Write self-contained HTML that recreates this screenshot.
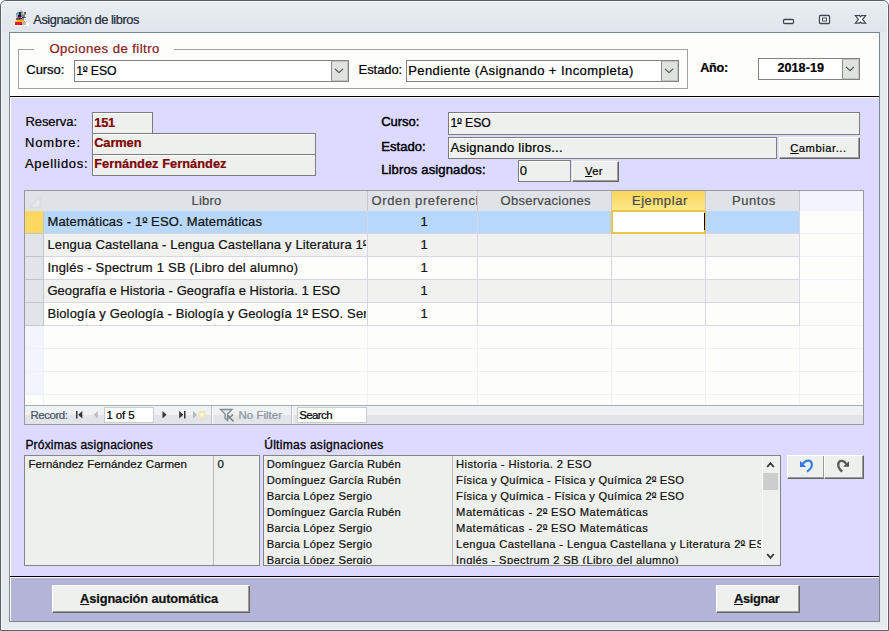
<!DOCTYPE html>
<html><head><meta charset="utf-8"><style>
html,body{margin:0;padding:0;width:889px;height:631px;overflow:hidden;background:#fff;}
body{position:relative;font-family:"Liberation Sans",sans-serif;}
body>div,body>svg{position:absolute;}
.o{text-decoration:underline;text-underline-offset:-0.3em;text-decoration-thickness:1px;}
.t{white-space:pre;-webkit-text-stroke:0.22px currentColor;}
</style></head><body>
<div style="left:0px;top:0px;width:889px;height:631px;background:#e6ebef;border:1px solid #56616c;border-radius:6px 6px 0 0;box-sizing:border-box;"></div>
<div style="left:1px;top:1px;width:887px;height:629px;border:1px solid #f7f9fa;border-radius:5px 5px 0 0;box-sizing:border-box;"></div>
<div style="left:2px;top:2px;width:885px;height:30px;background:linear-gradient(#e9eef2,#dfe5ea);border-radius:4px 4px 0 0;"></div>
<svg style="left:12px;top:8px" width="18" height="18" viewBox="0 0 18 18" shape-rendering="crispEdges">
<rect x="1" y="15" width="16" height="3" fill="#fbfbfb"/>
<rect x="8" y="2" width="3" height="2" fill="#e9a6d9"/><rect x="10" y="2" width="2" height="1" fill="#f4f4f4"/>
<rect x="5" y="4" width="2" height="1" fill="#d86fd0"/><rect x="7" y="4" width="2" height="1" fill="#222"/><rect x="9" y="4" width="2" height="1" fill="#3f9be8"/><rect x="11" y="4" width="2" height="2" fill="#e0e0e0"/><rect x="12" y="4" width="2" height="2" fill="#666"/>
<rect x="4" y="5" width="3" height="2" fill="#52a7f0"/><rect x="7" y="5" width="2" height="2" fill="#1c1c2c"/><rect x="9" y="5" width="2" height="2" fill="#8fcf3a"/><rect x="11" y="6" width="3" height="1" fill="#9a9a9a"/>
<rect x="4" y="7" width="2" height="2" fill="#8fd33a"/><rect x="6" y="7" width="3" height="2" fill="#141430"/><rect x="9" y="7" width="1" height="2" fill="#7a58c8"/><rect x="10" y="7" width="3" height="2" fill="#7d7d7d"/>
<rect x="5" y="9" width="4" height="1" fill="#c02ad0"/><rect x="9" y="9" width="1" height="1" fill="#eee"/><rect x="10" y="9" width="2" height="1" fill="#3a2048"/><rect x="12" y="9" width="2" height="1" fill="#6a6a6a"/>
<rect x="4" y="10" width="3" height="1" fill="#a81ec0"/><rect x="7" y="10" width="3" height="1" fill="#1a1a1a"/><rect x="10" y="10" width="2" height="1" fill="#888"/>
<rect x="4" y="11" width="4" height="1" fill="#6a6a28"/><rect x="8" y="11" width="2" height="1" fill="#f08a1e"/><rect x="10" y="11" width="2" height="1" fill="#8a8a70"/>
<rect x="5" y="12" width="6" height="1" fill="#f2a21e"/><rect x="11" y="12" width="1" height="1" fill="#e9a0a0"/>
<rect x="3" y="13" width="9" height="1" fill="#f0c21a"/><rect x="12" y="13" width="1" height="1" fill="#aaa"/>
<rect x="3" y="14" width="7" height="3" fill="#ea1a1e"/><rect x="8" y="16" width="2" height="1" fill="#a00"/><rect x="10" y="14" width="4" height="2" fill="#c9b4b4"/><rect x="10" y="16" width="4" height="1" fill="#bbb"/>
</svg>
<div class="t" style="left:33.30px;top:10.50px;font-size:12.80px;line-height:17.92px;letter-spacing:-0.450px;color:#1e2b38;">Asignación de libros</div>
<svg style="left:780px;top:12px" width="92" height="16" viewBox="0 0 92 16">
<rect x="3.5" y="7.5" width="10" height="4" rx="1.2" fill="#fff" stroke="#3c4652" stroke-width="1.3"/>
<rect x="39.5" y="3.5" width="10" height="8" rx="1" fill="#fff" stroke="#3c4652" stroke-width="1.3"/>
<rect x="42.5" y="6" width="4" height="3" fill="#fff" stroke="#3c4652" stroke-width="1"/>
<defs><clipPath id="cxo"><rect x="70" y="3" width="20" height="8.8"/></clipPath><clipPath id="cxi"><rect x="70" y="4.2" width="20" height="6.4"/></clipPath></defs>
<g clip-path="url(#cxo)"><path d="M74.9 0.4 L86.1 14.4 M86.1 0.4 L74.9 14.4" stroke="#3c4652" stroke-width="4.4"/></g>
<g clip-path="url(#cxi)"><path d="M74.9 0.4 L86.1 14.4 M86.1 0.4 L74.9 14.4" stroke="#fff" stroke-width="2.1"/></g>
</svg>
<div style="left:9px;top:32px;width:871px;height:590px;border:1px solid #7d868f;box-sizing:border-box;background:#fdfdfb;"></div>
<div style="left:10px;top:96px;width:869px;height:1px;background:#000;"></div>
<div style="left:10px;top:97px;width:869px;height:479px;background:#dcdaff;border-left:1px solid #fff;border-top:1px solid #fff;box-sizing:border-box;"></div>
<div style="left:10px;top:576px;width:869px;height:1px;background:#000;"></div>
<div style="left:10px;top:577px;width:869px;height:44px;background:#b4b3d8;border-left:1px solid #fff;border-top:1px solid #fff;box-sizing:border-box;"></div>
<div style="left:18px;top:49px;width:670px;height:40px;border:1px solid #a0a0a0;box-sizing:border-box;"></div>
<div style="left:34px;top:44px;width:140px;height:10px;background:#fdfdfb;"></div>
<div class="t" style="left:49.40px;top:40.29px;font-size:13.20px;line-height:18.48px;letter-spacing:0.429px;color:#8b1a1a;">Opciones de filtro</div>
<div class="t" style="left:26.30px;top:61.40px;font-size:13.00px;line-height:18.20px;letter-spacing:-0.057px;color:#000;">Curso:</div>
<div style="left:74px;top:60px;width:275px;height:22px;border:1px solid #838383;box-sizing:border-box;background:#fff;"></div>
<div style="left:331px;top:61px;width:17px;height:20px;background:#e0e2e0;border:1px solid #c2c4c2;border-left-color:#8a8a8a;box-sizing:border-box;"></div>
<svg style="left:333.5px;top:66.0px" width="10" height="8" viewBox="0 0 10 8"><path d="M1 2.8 L5 6.6 L9 2.8" fill="none" stroke="#444" stroke-width="1.1"/></svg>
<div class="t" style="left:76.20px;top:62.73px;font-size:12.20px;line-height:17.08px;color:#000;">1<span class="o">º</span> ESO</div>
<div class="t" style="left:358.60px;top:61.40px;font-size:13.00px;line-height:18.20px;letter-spacing:-0.080px;color:#000;">Estado:</div>
<div style="left:406px;top:60px;width:273px;height:22px;border:1px solid #838383;box-sizing:border-box;background:#fff;"></div>
<div style="left:661px;top:61px;width:17px;height:20px;background:#e0e2e0;border:1px solid #c2c4c2;border-left-color:#8a8a8a;box-sizing:border-box;"></div>
<svg style="left:663.5px;top:66.0px" width="10" height="8" viewBox="0 0 10 8"><path d="M1 2.8 L5 6.6 L9 2.8" fill="none" stroke="#444" stroke-width="1.1"/></svg>
<div class="t" style="left:408.20px;top:61.90px;font-size:13.00px;line-height:18.20px;letter-spacing:0.435px;color:#000;">Pendiente (Asignando + Incompleta)</div>
<div class="t" style="left:700.20px;top:60.31px;font-size:12.60px;line-height:17.64px;font-weight:bold;letter-spacing:-0.229px;color:#000;">Año:</div>
<div style="left:758px;top:58px;width:102px;height:22px;border:1px solid #838383;box-sizing:border-box;background:#fff;"></div>
<div style="left:842px;top:59px;width:17px;height:20px;background:#e0e2e0;border:1px solid #c2c4c2;border-left-color:#8a8a8a;box-sizing:border-box;"></div>
<svg style="left:844.5px;top:64.0px" width="10" height="8" viewBox="0 0 10 8"><path d="M1 2.8 L5 6.6 L9 2.8" fill="none" stroke="#444" stroke-width="1.1"/></svg>
<div class="t" style="left:777.40px;top:60.31px;font-size:12.60px;line-height:17.64px;font-weight:bold;letter-spacing:0.061px;color:#000;">2018-19</div>
<div class="t" style="left:25.40px;top:113.40px;font-size:13.00px;line-height:18.20px;letter-spacing:-0.059px;color:#000;">Reserva:</div>
<div class="t" style="left:25.00px;top:134.40px;font-size:13.00px;line-height:18.20px;letter-spacing:0.859px;color:#000;">Nombre:</div>
<div class="t" style="left:25.00px;top:155.00px;font-size:13.00px;line-height:18.20px;letter-spacing:0.682px;color:#000;">Apellidos:</div>
<div style="left:92px;top:112px;width:61px;height:22px;background:#eef0ed;border:1px solid #7c7c7c;box-shadow:inset 1px 1px 0 #fff;box-sizing:border-box;"></div>
<div style="left:92px;top:133px;width:224px;height:22px;background:#eef0ed;border:1px solid #7c7c7c;box-shadow:inset 1px 1px 0 #fff;box-sizing:border-box;"></div>
<div style="left:92px;top:154px;width:224px;height:22px;background:#eef0ed;border:1px solid #7c7c7c;box-shadow:inset 1px 1px 0 #fff;box-sizing:border-box;"></div>
<div class="t" style="left:94.20px;top:113.60px;font-size:12.80px;line-height:17.92px;font-weight:bold;letter-spacing:-0.177px;color:#800000;">151</div>
<div class="t" style="left:94.20px;top:134.30px;font-size:12.80px;line-height:17.92px;font-weight:bold;letter-spacing:-0.072px;color:#800000;">Carmen</div>
<div class="t" style="left:94.20px;top:155.00px;font-size:12.80px;line-height:17.92px;font-weight:bold;letter-spacing:0.040px;color:#800000;">Fernández Fernández</div>
<div class="t" style="left:381.20px;top:113.40px;font-size:13.00px;line-height:18.20px;letter-spacing:-0.017px;color:#000;-webkit-text-stroke:0.45px #000;">Curso:</div>
<div class="t" style="left:381.20px;top:138.40px;font-size:13.00px;line-height:18.20px;letter-spacing:0.053px;color:#000;-webkit-text-stroke:0.45px #000;">Estado:</div>
<div class="t" style="left:381.20px;top:161.40px;font-size:13.00px;line-height:18.20px;letter-spacing:0.151px;color:#000;-webkit-text-stroke:0.45px #000;">Libros asignados:</div>
<div style="left:448px;top:112px;width:412px;height:23px;background:#eef0ed;border:1px solid #7c7c7c;box-shadow:inset 1px 1px 0 #fff;box-sizing:border-box;"></div>
<div class="t" style="left:450.40px;top:114.73px;font-size:12.20px;line-height:17.08px;color:#000;">1<span class="o">º</span> ESO</div>
<div style="left:448px;top:137px;width:329px;height:22px;background:#eef0ed;border:1px solid #7c7c7c;box-shadow:inset 1px 1px 0 #fff;box-sizing:border-box;"></div>
<div class="t" style="left:450.40px;top:138.90px;font-size:13.00px;line-height:18.20px;letter-spacing:0.292px;color:#000;">Asignando libros...</div>
<div style="left:779px;top:137px;width:81px;height:22px;background:#eef0ed;border-top:1px solid #fff;border-left:1px solid #fff;border-right:1px solid #646464;border-bottom:1px solid #646464;box-shadow:inset -1px -1px 0 #9c9c9c;box-sizing:border-box;"></div>
<div class="t" style="left:790.20px;top:140.98px;font-size:11.20px;line-height:15.68px;color:#000;letter-spacing:0.551px;"><u>C</u>ambiar...</div>
<div style="left:518px;top:160px;width:53px;height:22px;background:#eef0ed;border:1px solid #7c7c7c;box-shadow:inset 1px 1px 0 #fff;box-sizing:border-box;"></div>
<div class="t" style="left:519.80px;top:162.40px;font-size:13.00px;line-height:18.20px;color:#000;">0</div>
<div style="left:572px;top:161px;width:47px;height:21px;background:#eef0ed;border-top:1px solid #fff;border-left:1px solid #fff;border-right:1px solid #646464;border-bottom:1px solid #646464;box-shadow:inset -1px -1px 0 #9c9c9c;box-sizing:border-box;"></div>
<div class="t" style="left:585.00px;top:164.28px;font-size:11.20px;line-height:15.68px;color:#000;letter-spacing:0.295px;"><u>V</u>er</div>
<div style="left:24px;top:190px;width:840px;height:235px;border:1px solid #9a9a9a;box-sizing:border-box;background:#fdfdfb;"></div>
<div style="left:25px;top:191px;width:838px;height:20px;background:#f4f4fe;"></div>
<div style="left:25px;top:191px;width:775px;height:20px;background:#dfe3e8;"></div>
<div style="left:612px;top:191px;width:93px;height:20px;background:linear-gradient(#f9d55a,#fde98c);"></div>
<div style="left:367px;top:191px;width:1px;height:20px;background:#c4c8cc;"></div>
<div style="left:477px;top:191px;width:1px;height:20px;background:#c4c8cc;"></div>
<div style="left:611px;top:191px;width:1px;height:20px;background:#c4c8cc;"></div>
<div style="left:705px;top:191px;width:1px;height:20px;background:#c4c8cc;"></div>
<div style="left:799px;top:191px;width:1px;height:20px;background:#c4c8cc;"></div>
<svg style="left:28px;top:195px" width="14" height="14" viewBox="0 0 14 14"><path d="M2 12 L12 2 L12 12 Z" fill="#e9ecef" stroke="#cfd4d9" stroke-width="0.8"/></svg>
<div class="t" style="left:191.50px;top:192.30px;font-size:13.00px;line-height:18.20px;letter-spacing:0.224px;color:#4a4a4a;">Libro</div>
<div class="t" style="left:371.50px;top:192.30px;font-size:13.00px;line-height:18.20px;color:#4a4a4a;width:105px;overflow:hidden;letter-spacing:0.63px;">Orden preferencia</div>
<div class="t" style="left:500.50px;top:192.30px;font-size:13.00px;line-height:18.20px;letter-spacing:0.275px;color:#4a4a4a;">Observaciones</div>
<div class="t" style="left:631.90px;top:192.30px;font-size:13.00px;line-height:18.20px;letter-spacing:0.587px;color:#4a4a4a;">Ejemplar</div>
<div class="t" style="left:732.00px;top:192.30px;font-size:13.00px;line-height:18.20px;letter-spacing:0.546px;color:#4a4a4a;">Puntos</div>
<div style="left:44px;top:211px;width:755px;height:22px;background:#b7d8fb;"></div>
<div style="left:25px;top:211px;width:18px;height:22px;background:#ffd862;"></div>
<div style="left:25px;top:233px;width:775px;height:1px;background:#d6d6e6;"></div>
<div style="left:800px;top:233px;width:63px;height:1px;background:#eef1f6;"></div>
<div style="left:25px;top:233px;width:18px;height:1px;background:#c4c8cc;"></div>
<div style="left:44px;top:234px;width:755px;height:22px;background:#f1f2ef;"></div>
<div style="left:25px;top:234px;width:18px;height:22px;background:#e1e5e9;"></div>
<div style="left:25px;top:256px;width:775px;height:1px;background:#d6d6e6;"></div>
<div style="left:800px;top:256px;width:63px;height:1px;background:#eef1f6;"></div>
<div style="left:25px;top:256px;width:18px;height:1px;background:#c4c8cc;"></div>
<div style="left:44px;top:257px;width:755px;height:22px;background:#fdfdfb;"></div>
<div style="left:25px;top:257px;width:18px;height:22px;background:#e1e5e9;"></div>
<div style="left:25px;top:279px;width:775px;height:1px;background:#d6d6e6;"></div>
<div style="left:800px;top:279px;width:63px;height:1px;background:#eef1f6;"></div>
<div style="left:25px;top:279px;width:18px;height:1px;background:#c4c8cc;"></div>
<div style="left:44px;top:280px;width:755px;height:22px;background:#f1f2ef;"></div>
<div style="left:25px;top:280px;width:18px;height:22px;background:#e1e5e9;"></div>
<div style="left:25px;top:302px;width:775px;height:1px;background:#d6d6e6;"></div>
<div style="left:800px;top:302px;width:63px;height:1px;background:#eef1f6;"></div>
<div style="left:25px;top:302px;width:18px;height:1px;background:#c4c8cc;"></div>
<div style="left:44px;top:303px;width:755px;height:22px;background:#fdfdfb;"></div>
<div style="left:25px;top:303px;width:18px;height:22px;background:#e1e5e9;"></div>
<div style="left:25px;top:325px;width:775px;height:1px;background:#d6d6e6;"></div>
<div style="left:800px;top:325px;width:63px;height:1px;background:#eef1f6;"></div>
<div style="left:25px;top:325px;width:18px;height:1px;background:#c4c8cc;"></div>
<div style="left:25px;top:326px;width:18px;height:22px;background:#f4f4fd;"></div>
<div style="left:25px;top:348px;width:838px;height:1px;background:#eef1f6;"></div>
<div style="left:25px;top:349px;width:18px;height:22px;background:#f4f4fd;"></div>
<div style="left:25px;top:371px;width:838px;height:1px;background:#eef1f6;"></div>
<div style="left:25px;top:372px;width:18px;height:22px;background:#f4f4fd;"></div>
<div style="left:25px;top:394px;width:838px;height:1px;background:#eef1f6;"></div>
<div style="left:43px;top:211px;width:1px;height:115px;background:#d6d6e6;"></div>
<div style="left:43px;top:326px;width:1px;height:79px;background:#eef1f6;"></div>
<div style="left:367px;top:211px;width:1px;height:115px;background:#d6d6e6;"></div>
<div style="left:367px;top:326px;width:1px;height:79px;background:#eef1f6;"></div>
<div style="left:477px;top:211px;width:1px;height:115px;background:#d6d6e6;"></div>
<div style="left:477px;top:326px;width:1px;height:79px;background:#eef1f6;"></div>
<div style="left:611px;top:211px;width:1px;height:115px;background:#d6d6e6;"></div>
<div style="left:611px;top:326px;width:1px;height:79px;background:#eef1f6;"></div>
<div style="left:705px;top:211px;width:1px;height:115px;background:#d6d6e6;"></div>
<div style="left:705px;top:326px;width:1px;height:79px;background:#eef1f6;"></div>
<div style="left:799px;top:211px;width:1px;height:115px;background:#d6d6e6;"></div>
<div style="left:799px;top:326px;width:1px;height:79px;background:#eef1f6;"></div>
<div style="left:43px;top:211px;width:1px;height:115px;background:#c4c8cc;"></div>
<div class="t" style="left:47.40px;top:212.60px;font-size:13.00px;line-height:18.20px;color:#111;width:319px;overflow:hidden;letter-spacing:0.169px;">Matemáticas - 1<span class="o">º</span> ESO. Matemáticas</div>
<div class="t" style="left:420.50px;top:212.60px;font-size:13.00px;line-height:18.20px;color:#111;">1</div>
<div class="t" style="left:47.40px;top:235.60px;font-size:13.00px;line-height:18.20px;color:#111;width:319px;overflow:hidden;letter-spacing:0.147px;">Lengua Castellana - Lengua Castellana y Literatura 1<span class="o">º</span> ESO</div>
<div class="t" style="left:420.50px;top:235.60px;font-size:13.00px;line-height:18.20px;color:#111;">1</div>
<div class="t" style="left:47.40px;top:258.60px;font-size:13.00px;line-height:18.20px;color:#111;width:319px;overflow:hidden;letter-spacing:0.214px;">Inglés - Spectrum 1 SB (Libro del alumno)</div>
<div class="t" style="left:420.50px;top:258.60px;font-size:13.00px;line-height:18.20px;color:#111;">1</div>
<div class="t" style="left:47.40px;top:281.60px;font-size:13.00px;line-height:18.20px;color:#111;width:319px;overflow:hidden;letter-spacing:0.059px;">Geografía e Historia - Geografía e Historia. 1 ESO</div>
<div class="t" style="left:420.50px;top:281.60px;font-size:13.00px;line-height:18.20px;color:#111;">1</div>
<div class="t" style="left:47.40px;top:304.60px;font-size:13.00px;line-height:18.20px;color:#111;width:319px;overflow:hidden;letter-spacing:0.147px;">Biología y Geología - Biología y Geología 1<span class="o">º</span> ESO. Serie</div>
<div class="t" style="left:420.50px;top:304.60px;font-size:13.00px;line-height:18.20px;color:#111;">1</div>
<div style="left:611px;top:210px;width:95px;height:24px;border:2px solid #eac54a;background:#fff;box-sizing:border-box;"></div>
<div style="left:704px;top:213px;width:1px;height:17px;background:#000;"></div>
<div style="left:25px;top:405px;width:838px;height:1px;background:#a9adb2;"></div>
<div style="left:25px;top:406px;width:838px;height:9px;background:#eef2f5;"></div>
<div style="left:25px;top:415px;width:838px;height:9px;background:#e1e5e9;"></div>
<div class="t" style="left:30.40px;top:407.27px;font-size:11.50px;line-height:16.10px;letter-spacing:-0.444px;color:#4a5560;">Record:</div>
<svg style="left:70px;top:406px" width="145" height="18" viewBox="0 0 145 18">
<rect x="6" y="5" width="1.5" height="7.5" fill="#2e353b"/><path d="M12.3 5 L8.2 8.75 L12.3 12.5 Z" fill="#2e353b"/>
<path d="M27.8 5 L23.8 8.75 L27.8 12.5 Z" fill="#b9bec4"/>
<path d="M92.5 5 L96.5 8.75 L92.5 12.5 Z" fill="#2e353b"/>
<path d="M109.2 5 L113.3 8.75 L109.2 12.5 Z" fill="#2e353b"/><rect x="114" y="5" width="1.5" height="7.5" fill="#2e353b"/>
<path d="M123 5 L127 8.75 L123 12.5 Z" fill="#b4b9bf"/>
<rect x="128.5" y="5" width="7" height="7.5" fill="#f1e6b2"/><circle cx="132" cy="8.8" r="2" fill="#faf5dc"/>
</svg>
<svg style="left:218px;top:407px" width="18" height="16" viewBox="0 0 18 16">
<path d="M2.5 2.5 H14 L9.5 7 V13.5 L7 11.5 V7 Z" fill="#e4e7ea" stroke="#858b91" stroke-width="1.3"/>
<path d="M9.5 8 L15.5 14.5 M15 7.5 L10 12" stroke="#7d8389" stroke-width="1.6"/>
</svg>
<div style="left:104px;top:407px;width:50px;height:16px;background:#fff;border:1px solid #c9cdd2;box-sizing:border-box;"></div>
<div class="t" style="left:106.40px;top:407.47px;font-size:11.50px;line-height:16.10px;letter-spacing:-0.094px;color:#000;">1 of 5</div>
<div style="left:211px;top:406px;width:1px;height:18px;background:#bfc4c9;"></div>
<div style="left:212px;top:406px;width:1px;height:18px;background:#fff;"></div>
<div style="left:291px;top:406px;width:1px;height:18px;background:#bfc4c9;"></div>
<div style="left:292px;top:406px;width:1px;height:18px;background:#fff;"></div>
<div class="t" style="left:238.50px;top:407.47px;font-size:11.50px;line-height:16.10px;letter-spacing:0.006px;color:#8d9399;">No Filter</div>
<div style="left:297px;top:407px;width:70px;height:16px;background:#fff;border:1px solid #c9cdd2;box-sizing:border-box;"></div>
<div class="t" style="left:299.20px;top:407.47px;font-size:11.50px;line-height:16.10px;letter-spacing:-0.607px;color:#000;">Search</div>
<div class="t" style="left:25.40px;top:436.94px;font-size:12.00px;line-height:16.80px;letter-spacing:0.196px;color:#000;-webkit-text-stroke:0.3px #000;">Próximas asignaciones</div>
<div class="t" style="left:264.20px;top:436.94px;font-size:12.00px;line-height:16.80px;letter-spacing:0.296px;color:#000;-webkit-text-stroke:0.3px #000;">Últimas asignaciones</div>
<div style="left:24px;top:455px;width:236px;height:111px;background:#eef0ed;border:1px solid #858585;box-sizing:border-box;"></div>
<div style="left:213px;top:456px;width:1px;height:109px;background:#b9b9b9;"></div>
<div class="t" style="left:28.50px;top:456.27px;font-size:11.50px;line-height:16.10px;letter-spacing:0.047px;color:#111;">Fernández Fernández Carmen</div>
<div class="t" style="left:217.40px;top:456.27px;font-size:11.50px;line-height:16.10px;color:#111;">0</div>
<div style="left:263px;top:455px;width:518px;height:111px;background:#eef0ed;border:1px solid #858585;box-sizing:border-box;"></div>
<div style="left:452px;top:456px;width:1px;height:109px;background:#b9b9b9;"></div>
<div style="left:264px;top:456px;width:498px;height:108px;overflow:hidden;">
<div class="t" style="position:absolute;left:2.80px;top:0.88px;font-size:11.2px;line-height:15.68px;letter-spacing:0.186px;color:#111;">Domínguez García Rubén</div>
<div class="t" style="position:absolute;left:192.10px;top:0.88px;width:305px;overflow:hidden;font-size:11.2px;line-height:15.68px;letter-spacing:0.416px;color:#111;">Historia - Historia. 2 ESO</div>
<div class="t" style="position:absolute;left:2.80px;top:16.88px;font-size:11.2px;line-height:15.68px;letter-spacing:0.186px;color:#111;">Domínguez García Rubén</div>
<div class="t" style="position:absolute;left:192.10px;top:16.88px;width:305px;overflow:hidden;font-size:11.2px;line-height:15.68px;letter-spacing:0.270px;color:#111;">Física y Química - Física y Química 2<span class="o">º</span> ESO</div>
<div class="t" style="position:absolute;left:2.80px;top:32.88px;font-size:11.2px;line-height:15.68px;letter-spacing:0.247px;color:#111;">Barcia López Sergio</div>
<div class="t" style="position:absolute;left:192.10px;top:32.88px;width:305px;overflow:hidden;font-size:11.2px;line-height:15.68px;letter-spacing:0.270px;color:#111;">Física y Química - Física y Química 2<span class="o">º</span> ESO</div>
<div class="t" style="position:absolute;left:2.80px;top:48.88px;font-size:11.2px;line-height:15.68px;letter-spacing:0.186px;color:#111;">Domínguez García Rubén</div>
<div class="t" style="position:absolute;left:192.10px;top:48.88px;width:305px;overflow:hidden;font-size:11.2px;line-height:15.68px;letter-spacing:0.480px;color:#111;">Matemáticas - 2<span class="o">º</span> ESO Matemáticas</div>
<div class="t" style="position:absolute;left:2.80px;top:64.88px;font-size:11.2px;line-height:15.68px;letter-spacing:0.247px;color:#111;">Barcia López Sergio</div>
<div class="t" style="position:absolute;left:192.10px;top:64.88px;width:305px;overflow:hidden;font-size:11.2px;line-height:15.68px;letter-spacing:0.480px;color:#111;">Matemáticas - 2<span class="o">º</span> ESO Matemáticas</div>
<div class="t" style="position:absolute;left:2.80px;top:80.88px;font-size:11.2px;line-height:15.68px;letter-spacing:0.247px;color:#111;">Barcia López Sergio</div>
<div class="t" style="position:absolute;left:192.10px;top:80.88px;width:305px;overflow:hidden;font-size:11.2px;line-height:15.68px;letter-spacing:0.379px;color:#111;">Lengua Castellana - Lengua Castellana y Literatura 2<span class="o">º</span> ESO</div>
<div class="t" style="position:absolute;left:2.80px;top:96.88px;font-size:11.2px;line-height:15.68px;letter-spacing:0.247px;color:#111;">Barcia López Sergio</div>
<div class="t" style="position:absolute;left:192.10px;top:96.88px;width:305px;overflow:hidden;font-size:11.2px;line-height:15.68px;letter-spacing:0.354px;color:#111;">Inglés - Spectrum 2 SB (Libro del alumno)</div>
</div>
<div style="left:762px;top:456px;width:1px;height:109px;background:#fff;"></div>
<div style="left:763px;top:473px;width:15px;height:17px;background:#cdcdcd;"></div>
<svg style="left:764px;top:460px" width="12" height="10" viewBox="0 0 12 10"><path d="M3.2 7 L6.5 3.2 L9.8 7" fill="none" stroke="#3a3a3a" stroke-width="1.9"/></svg>
<svg style="left:764px;top:551px" width="12" height="10" viewBox="0 0 12 10"><path d="M3.2 3 L6.5 6.8 L9.8 3" fill="none" stroke="#3a3a3a" stroke-width="1.9"/></svg>
<div style="left:787px;top:455px;width:38px;height:24px;background:#eef0ed;border-top:1px solid #fff;border-left:1px solid #fff;border-right:1px solid #646464;border-bottom:1px solid #646464;box-shadow:inset -1px -1px 0 #9c9c9c;box-sizing:border-box;"></div>
<div style="left:824px;top:455px;width:40px;height:24px;background:#eef0ed;border-top:1px solid #fff;border-left:1px solid #fff;border-right:1px solid #646464;border-bottom:1px solid #646464;box-shadow:inset -1px -1px 0 #9c9c9c;box-sizing:border-box;"></div>
<svg style="left:796px;top:457px" width="60" height="18" viewBox="0 0 60 18">
<path d="M4 3.8 V9.9 H10.2 Z" fill="#3477e0"/>
<path d="M6.5 7.2 C9 2.8 15 2.2 15.8 6.5 C16.4 10 13.5 13 11 14.6" fill="none" stroke="#3a7fe6" stroke-width="2.2"/>
<path d="M53 4.3 V9.8 H47 Z" fill="#555"/>
<path d="M50.2 7.2 C48 3 43 2.6 42.3 6.8 C41.8 10.4 44.2 13 46.2 14.6" fill="none" stroke="#5e5e5e" stroke-width="2.4"/>
</svg>
<div style="left:52px;top:585px;width:198px;height:28px;background:#eef0ed;border-top:1px solid #fff;border-left:1px solid #fff;border-right:1px solid #646464;border-bottom:1px solid #646464;box-shadow:inset -1px -1px 0 #9c9c9c;box-sizing:border-box;"></div>
<div class="t" style="left:80.10px;top:589.50px;font-size:12.80px;line-height:17.92px;font-weight:bold;color:#111;letter-spacing:-0.105px;"><u>A</u>signación automática</div>
<div style="left:716px;top:585px;width:84px;height:28px;background:#eef0ed;border-top:1px solid #fff;border-left:1px solid #fff;border-right:1px solid #646464;border-bottom:1px solid #646464;box-shadow:inset -1px -1px 0 #9c9c9c;box-sizing:border-box;"></div>
<div class="t" style="left:734.00px;top:589.50px;font-size:12.80px;line-height:17.92px;font-weight:bold;color:#111;letter-spacing:-0.309px;"><u>A</u>signar</div>
</body></html>
